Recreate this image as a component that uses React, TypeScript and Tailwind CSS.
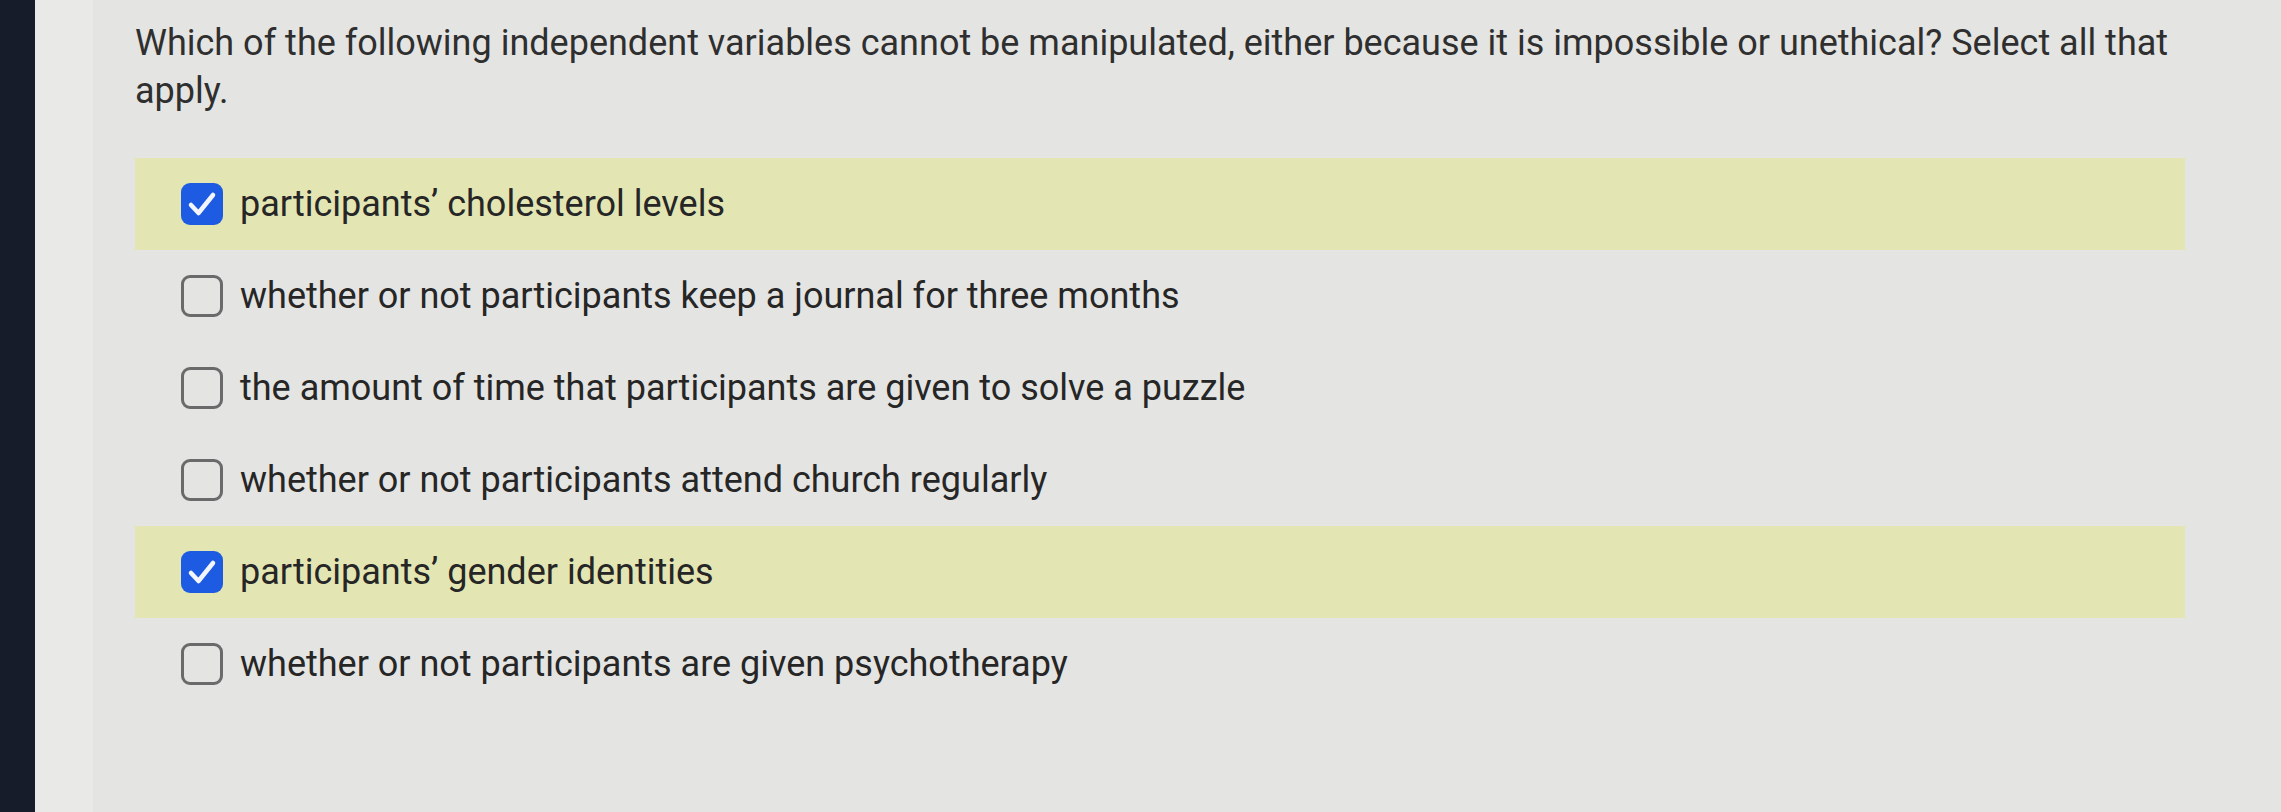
import { useState } from 'react';

const options = [
  { id: 1, label: 'participants\u2019 cholesterol levels', checked: true },
  { id: 2, label: 'whether or not participants keep a journal for three months', checked: false },
  { id: 3, label: 'the amount of time that participants are given to solve a puzzle', checked: false },
  { id: 4, label: 'whether or not participants attend church regularly', checked: false },
  { id: 5, label: 'participants\u2019 gender identities', checked: true },
  { id: 6, label: 'whether or not participants are given psychotherapy', checked: false },
];

function CheckBox({ checked }: { checked: boolean }) {
  if (checked) {
    return (
      <span className="flex h-[42px] w-[42px] shrink-0 items-center justify-center rounded-[9px] bg-[#1d5be3]">
        <svg viewBox="0 0 42 42" className="h-[42px] w-[42px]" fill="none">
          <path d="M10 22 L17.5 30 L32 12" stroke="#f4f6ff" strokeWidth="4.5" strokeLinecap="round" strokeLinejoin="round" />
        </svg>
      </span>
    );
  }
  return <span className="h-[42px] w-[42px] shrink-0 rounded-[9px] border-[3px] border-[#6a6a6a]" />;
}

export default function App() {
  const [selected, setSelected] = useState<Record<number, boolean>>(
    Object.fromEntries(options.map(o => [o.id, o.checked]))
  );

  return (
    <div className="flex h-[812px] w-[2281px] overflow-hidden bg-[#e4e4e2] font-['Roboto',sans-serif]">
      <div className="w-[35px] shrink-0 bg-[#161c2a]" />
      <div className="w-[58px] shrink-0 bg-[#e9e9e7]" />
      <div className="flex-1 pl-[42px] pt-[19px]">
        <p className="w-[2090px] text-[36px] leading-[48px] text-[#2f2f2f]">
          Which of the following independent variables cannot be manipulated, either because it is impossible or unethical? Select all that apply.
        </p>
        <div className="mt-[43px] flex w-[2050px] flex-col">
          {options.map(opt => (
            <label
              key={opt.id}
              onClick={() => setSelected(s => ({ ...s, [opt.id]: !s[opt.id] }))}
              className={`flex h-[92px] cursor-pointer items-center gap-[17px] pl-[46px] ${selected[opt.id] ? 'bg-[#e3e5b3]' : ''}`}
            >
              <CheckBox checked={selected[opt.id]} />
              <span className="text-[36px] leading-none text-[#262626]">{opt.label}</span>
            </label>
          ))}
        </div>
      </div>
    </div>
  );
}
